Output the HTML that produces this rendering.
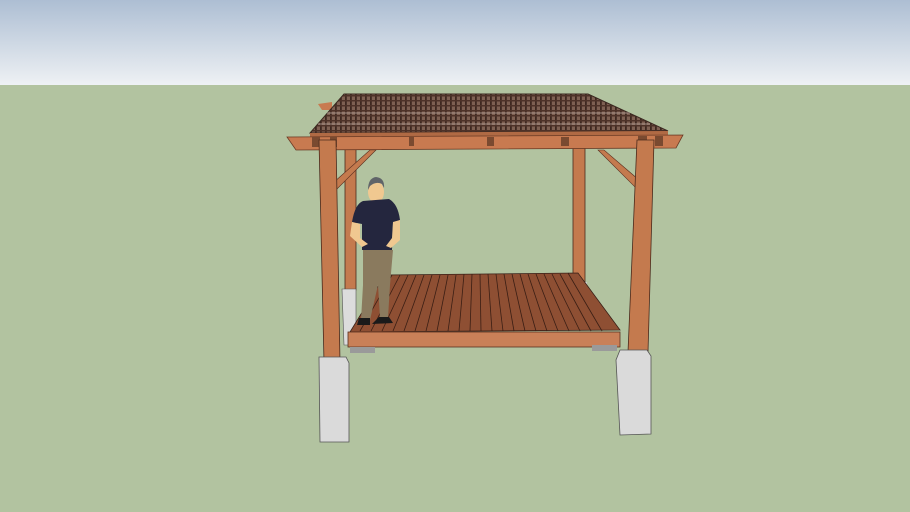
<!DOCTYPE html>
<html><head><meta charset="utf-8"><style>
html,body{margin:0;padding:0;width:910px;height:512px;overflow:hidden}
svg{display:block}
</style></head><body>
<svg width="910" height="512" viewBox="0 0 910 512" xmlns="http://www.w3.org/2000/svg">
<defs>
<linearGradient id="sky" x1="0" y1="0" x2="0" y2="1">
<stop offset="0" stop-color="#adbed3"/><stop offset="1" stop-color="#eef1f4"/>
</linearGradient>
<pattern id="grid" width="5" height="5" patternUnits="userSpaceOnUse">
<rect width="5" height="5" fill="#7e6052"/>
<rect x="0" y="0" width="1.8" height="5" fill="#3e2820"/>
<rect x="0" y="0" width="5" height="1.5" fill="#4e3228"/>
</pattern>
</defs>
<rect width="910" height="85" fill="url(#sky)"/>
<rect y="85" width="910" height="427" fill="#b2c3a0"/>

<polygon points="318,104 332,102 332,110 322,110" fill="#c87a50"/>
<polygon points="344,94 588,94 668,131 310,133" fill="url(#grid)" stroke="#3a2820" stroke-width="1"/>
<line x1="327" y1="113" x2="630" y2="113" stroke="#b09a90" stroke-width="2" opacity="0.45"/>
<line x1="318" y1="124" x2="650" y2="124" stroke="#b09a90" stroke-width="2" opacity="0.45"/>
<polygon points="310,133 668,131 668,135 310,137" fill="#b06a44"/>

<rect x="345" y="148" width="11" height="142" fill="#c47a4e" stroke="#4a2a1c" stroke-width="0.8"/>
<rect x="573" y="146" width="12" height="140" fill="#c47a4e" stroke="#4a2a1c" stroke-width="0.8"/>
<polygon points="342,289 356,289 356,345 344,345" fill="#dcdcdc" stroke="#555" stroke-width="0.6"/>
<polygon points="578,282 587,282 587,292 578,292" fill="#d0d0d0"/>

<polygon points="385,275 578,273 620,330 350,332" fill="#8e4f33" stroke="#3a2018" stroke-width="0.8"/>
<g stroke="#3a1e14" stroke-width="0.8">
<line x1="392" y1="275" x2="360" y2="331"/><line x1="400" y1="275" x2="371" y2="331"/>
<line x1="408" y1="275" x2="382" y2="331"/><line x1="416" y1="275" x2="393" y2="331"/>
<line x1="424" y1="275" x2="404" y2="331"/><line x1="432" y1="275" x2="415" y2="331"/>
<line x1="440" y1="275" x2="426" y2="331"/><line x1="448" y1="275" x2="437" y2="331"/>
<line x1="456" y1="275" x2="448" y2="331"/><line x1="464" y1="274" x2="459" y2="331"/>
<line x1="472" y1="274" x2="470" y2="331"/><line x1="480" y1="274" x2="481" y2="331"/>
<line x1="488" y1="274" x2="492" y2="331"/><line x1="496" y1="274" x2="503" y2="331"/>
<line x1="504" y1="274" x2="514" y2="331"/><line x1="512" y1="274" x2="525" y2="331"/>
<line x1="520" y1="274" x2="536" y2="331"/><line x1="528" y1="274" x2="547" y2="331"/>
<line x1="536" y1="274" x2="558" y2="331"/><line x1="544" y1="274" x2="569" y2="331"/>
<line x1="552" y1="274" x2="580" y2="331"/><line x1="560" y1="274" x2="591" y2="331"/>
<line x1="568" y1="273" x2="602" y2="331"/>
</g>
<rect x="348" y="332" width="272" height="15" fill="#c98058" stroke="#5a3020" stroke-width="0.8"/>
<rect x="350" y="347" width="25" height="6" fill="#9a9a9a"/>
<rect x="592" y="345" width="25" height="6" fill="#9a9a9a"/>

<polygon points="287,137 683,135 676,148 296,150" fill="#c87a50" stroke="#6a3a24" stroke-width="0.8"/>
<g fill="#7a4a30">
<rect x="312" y="137" width="8" height="10"/><rect x="330" y="137" width="7" height="10"/>
<rect x="409" y="137" width="5" height="9"/><rect x="487" y="137" width="7" height="9"/>
<rect x="561" y="137" width="8" height="9"/><rect x="638" y="136" width="9" height="10"/><rect x="655" y="136" width="8" height="10"/>
</g>
<polygon points="333,183 370,150 376,150 336,190" fill="#c47a4e" stroke="#5a3020" stroke-width="0.6"/>
<polygon points="598,150 604,150 639,180 636,188" fill="#c47a4e" stroke="#5a3020" stroke-width="0.6"/>
<polygon points="319,140 336,140 340,362 324,362" fill="#c47a4e" stroke="#4a2a1c" stroke-width="0.8"/>
<polygon points="637,140 654,140 648,352 628,352" fill="#c47a4e" stroke="#4a2a1c" stroke-width="0.8"/>
<polygon points="319,357 346,357 349,363 349,442 320,442" fill="#dadada" stroke="#555" stroke-width="0.8"/>
<polygon points="620,350 647,350 651,356 651,434 620,435 616,360" fill="#dadada" stroke="#555" stroke-width="0.8"/>

<ellipse cx="376" cy="192" rx="8" ry="11" fill="#f0c890"/>
<path d="M368,190 Q368,178 376,177 Q385,178 384,188 L382,184 Q376,181 370,186 Z" fill="#606468"/>
<path d="M363,201 L389,199 Q398,204 400,220 L393,223 L392,250 L362,250 L362,224 L352,222 Q355,204 363,201 Z" fill="#24263e"/>
<path d="M352,222 L360,224 L360,238 L368,244 L362,247 L350,236 Z" fill="#f0c890"/>
<path d="M393,222 L400,220 L400,240 L391,248 L386,246 L392,238 Z" fill="#f0c890"/>
<path d="M363,250 L393,250 L390,285 L388,318 L380,318 L378,285 L370,320 L361,320 L363,285 Z" fill="#8a7a5e"/>
<path d="M359,318 L370,318 L370,325 L357,325 Z" fill="#1a1a1a"/>
<path d="M379,317 L389,317 L393,323 L372,324 Z" fill="#1a1a1a"/>
</svg>
</body></html>
